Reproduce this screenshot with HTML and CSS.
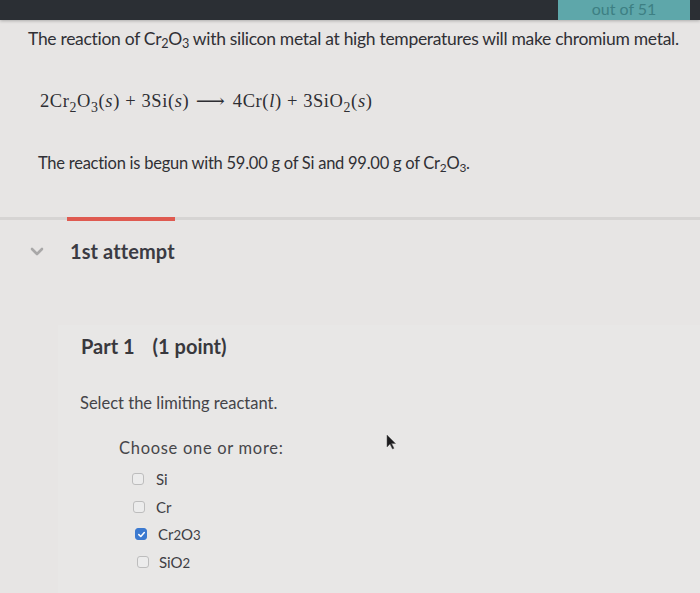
FILE: index.html
```html
<!DOCTYPE html>
<html>
<head>
<meta charset="utf-8">
<link rel="stylesheet" href="styles.css">
</head>
<body>
<div class="page">
  <header class="topbar">
    <div class="counter">out of 51</div>
  </header>
  <section class="question">
    <p class="intro">The reaction of Cr<sub>2</sub>O<sub>3</sub> with silicon metal at high temperatures will make chromium metal.</p>
    <p class="equation">2Cr<sub>2</sub>O<sub>3</sub>(<i>s</i>) + 3Si(<i>s</i>) <span class="arrow">⟶</span> 4Cr(<i>l</i>) + 3SiO<sub>2</sub>(<i>s</i>)</p>
    <p class="given">The reaction is begun with 59.00 g of Si and 99.00 g of Cr<sub>2</sub>O<sub>3</sub>.</p>
  </section>
  <div class="progress"><div class="progress-fill"></div></div>
  <div class="attempt">
    <svg class="chevron" width="14" height="10" viewBox="0 0 14 10"><path d="M2 2 L7 7 L12 2" fill="none" stroke="#a9a8a8" stroke-width="2.6" stroke-linecap="round" stroke-linejoin="round"/></svg>
    <span class="attempt-title">1st attempt</span>
  </div>
  <section class="part">
    <h2 class="part-title"><span>Part 1</span><span>(1 point)</span></h2>
    <p class="prompt">Select the limiting reactant.</p>
    <div class="choices">
      <p class="choose">Choose one or more:</p>
      <label class="option opt1"><span class="box"></span><span>Si</span></label>
      <label class="option opt2"><span class="box"></span><span>Cr</span></label>
      <label class="option opt3"><span class="box checked"><svg width="9" height="9" viewBox="0 0 9 9"><path d="M1.8 4.6 L3.8 6.5 L7.3 2.5" fill="none" stroke="#fff" stroke-width="1.5" stroke-linecap="round" stroke-linejoin="round"/></svg></span><span>Cr<small>2</small>O<small>3</small></span></label>
      <label class="option opt4"><span class="box"></span><span>SiO<small>2</small></span></label>
    </div>
  </section>
  <svg class="cursor" width="12" height="18" viewBox="0 0 12 18"><path d="M1 1 L1 13 L4 10 L6.5 15 L8 14.3 L5.6 9.5 L9.5 9.5 Z" fill="#1c1c1e" stroke="#555" stroke-width="0.5"/></svg>
</div>
</body>
</html>
```
FILE: styles.css
```css
html, body {
  margin: 0;
  padding: 0;
}
body {
  width: 700px;
  height: 593px;
  overflow: hidden;
  background: #e7e5e4;
  font-family: Lato, "Open Sans", sans-serif;
  color: #333338;
}
.page {
  position: relative;
  height: 593px;
  overflow: hidden;
}
.topbar {
  height: 20px;
  background: #2b2f34;
  box-shadow: 0 1px 3px rgba(0,0,0,0.25);
  display: flex;
  justify-content: flex-end;
  padding-right: 10px;
}
.counter {
  width: 132px;
  height: 20px;
  background: #5ea7aa;
  color: #3d7f83;
  font-size: 16px;
  line-height: 18px;
  text-align: center;
  overflow: hidden;
  box-sizing: border-box;
}
.question {
  padding: 0 0 0 28px;
}
.question p { margin: 0; }
sub {
  font-size: 0.72em;
  vertical-align: -0.25em;
  line-height: 0;
}
.intro {
  padding-top: 8px;
  font-size: 17.5px;
  letter-spacing: -0.3px;
  line-height: 22px;
  color: #303035;
}
.equation {
  padding-top: 40px;
  padding-left: 12px;
  font-family: "Liberation Serif", "DejaVu Serif", serif;
  font-size: 18.5px;
  line-height: 22px;
  color: #2e2e33;
  letter-spacing: 0.6px;
}
.equation sub {
  vertical-align: -0.35em;
  font-size: 0.75em;
}
.equation .arrow {
  display: inline-block;
  padding: 0 3px;
  transform: scaleX(1.1);
}
.given {
  padding-top: 40px;
  padding-left: 10px;
  font-size: 16.5px;
  letter-spacing: -0.25px;
  line-height: 22px;
  color: #303035;
}
.progress {
  margin-top: 44px;
  height: 3px;
  background: #d6d4d3;
}
.progress-fill {
  margin-left: 67px;
  width: 108px;
  height: 4px;
  margin-top: -1px;
  background: #df5a50;
}
.attempt {
  display: flex;
  align-items: center;
  padding: 19px 0 0 30px;
  height: 24px;
}
.chevron {
  margin-right: 26px;
  margin-top: 2px;
}
.attempt-title {
  font-weight: bold;
  font-size: 20px;
  color: #3b3b43;
  letter-spacing: 0.1px;
}
.part {
  margin: 62px 0 0 58px;
  padding: 8px 0 0 23px;
  background: #e8e7e6;
  height: 260px;
}
.part-title {
  margin: 0;
  font-size: 20px;
  font-weight: bold;
  color: #38383d;
  line-height: 26px;
  display: flex;
  gap: 18px;
}
.prompt {
  margin: 33px 0 0 -1px;
  font-size: 16.5px;
  color: #444448;
  line-height: 22px;
}
.choices {
  padding: 23px 0 0 38px;
}
.choose {
  margin: 0 0 6px 0;
  font-size: 16.5px;
  color: #46464a;
  letter-spacing: 0.7px;
  line-height: 22px;
}
.option {
  display: flex;
  align-items: center;
  gap: 12px;
  height: 27.8px;
  padding-left: 12px;
  font-size: 15px;
  color: #3e3e44;
}
.opt1 { padding-left: 13px; }
.opt2 { padding-left: 14px; gap: 11px; }
.opt3 { padding-left: 16px; gap: 11px; }
.opt4 { padding-left: 18px; gap: 10px; }
.option small {
  font-size: 0.88em;
}
.box {
  width: 10px;
  height: 10px;
  border: 1px solid #bdbdbd;
  border-radius: 3px;
  background: #ececec;
  display: flex;
  align-items: center;
  justify-content: center;
}
.box.checked {
  background: #3c7ad0;
  border-color: #3c7ad0;
}
.cursor {
  position: absolute;
  left: 386px;
  top: 434px;
}
```
